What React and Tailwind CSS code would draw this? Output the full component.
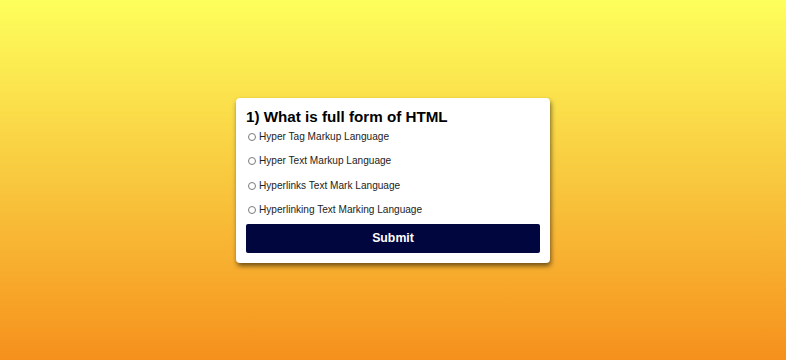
import { useState } from "react";

const options = [
  "Hyper Tag Markup Language",
  "Hyper Text Markup Language",
  "Hyperlinks Text Mark Language",
  "Hyperlinking Text Marking Language",
];

function Quiz() {
  const [picked, setPicked] = useState(null);

  return (
    <div className="w-[314px] bg-white rounded-[4px] px-[10px] pt-[10px] pb-[10px] shadow-[1px_3px_5px_rgba(0,0,0,0.55)]">
      <h2 className="text-[15.2px] leading-[17px] font-bold text-black">1) What is full form of HTML</h2>
      <ul>
        {options.map((opt, i) => (
          <li key={opt} className="h-[24.5px] flex items-center">
            <label className="flex items-center cursor-pointer">
              <input
                type="radio"
                name="answer"
                checked={picked === i}
                onChange={() => setPicked(i)}
                className="appearance-none w-[8px] h-[8px] ml-[2px] mr-[3px] rounded-full border border-[#7a7a7a] bg-white checked:bg-[#02073f]"
              />
              <span className="text-[10.1px] leading-[12px] text-[#222]">{opt}</span>
            </label>
          </li>
        ))}
      </ul>
      <button className="mt-[1px] w-full h-[29px] bg-[#02063f] rounded-[2px] text-white text-[12.3px] font-bold">
        Submit
      </button>
    </div>
  );
}

export default function App() {
  return (
    <div
      className="min-h-[360px] flex items-center justify-center bg-gradient-to-b from-[#fdff5c] via-[#f8c83e] to-[#f5901b]"
      style={{ fontFamily: '"Liberation Sans", Arial, sans-serif' }}
    >
      <Quiz />
    </div>
  );
}
